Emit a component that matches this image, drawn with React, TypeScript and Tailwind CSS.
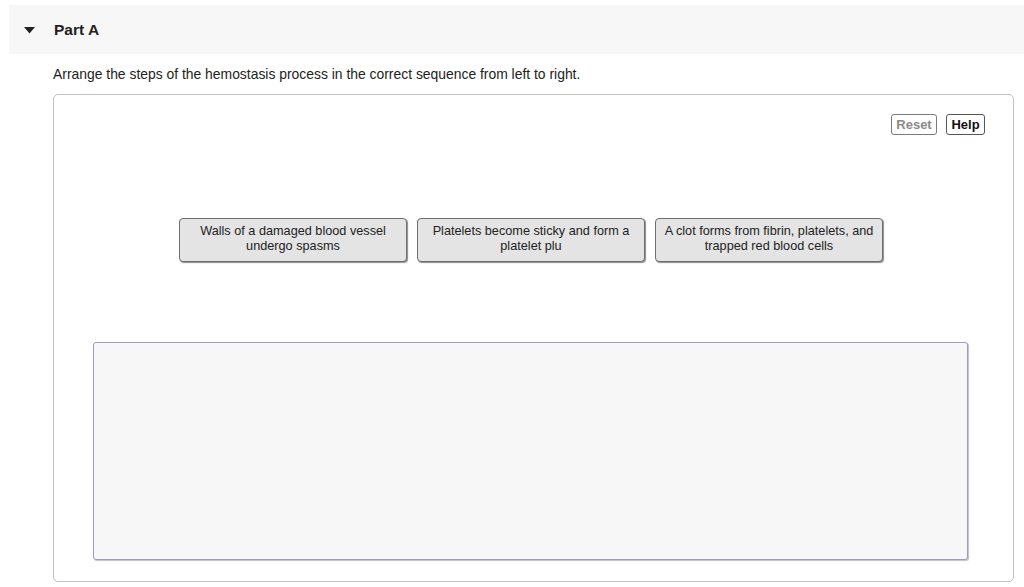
import React from "react";

const steps = [
  "Walls of a damaged blood vessel undergo spasms",
  "Platelets become sticky and form a platelet plu",
  "A clot forms from fibrin, platelets, and trapped red blood cells",
];

export default function App() {
  return (
    <div
      className="h-[587px] w-[1024px] overflow-hidden bg-white text-[#222]"
      style={{ fontFamily: '"Liberation Sans", Arial, sans-serif' }}
    >
      {/* Part header */}
      <div className="ml-[9px] mt-[5px] flex h-[49px] items-center bg-[#f7f7f7]">
        <svg width="11" height="7" viewBox="0 0 11 7" className="ml-[15px] mt-[1px]">
          <path d="M0 0 L11 0 L5.5 6.5 Z" fill="#222" />
        </svg>
        <span className="ml-[19px] text-[15.5px] font-bold text-[#222]">Part A</span>
      </div>

      <p className="ml-[53px] mt-[12px] text-[13.9px] leading-[16px] text-[#222]">
        Arrange the steps of the hemostasis process in the correct sequence from left to right.
      </p>

      {/* Activity area */}
      <div className="ml-[53px] mt-[12px] flex h-[488px] w-[961px] flex-col rounded-[5px] border border-[#c2c2c2]">
        <div className="mr-[28px] mt-[19px] flex justify-end gap-[9px]">
          <button className="h-[21px] w-[46px] rounded-[3px] border border-[#7a7a7a] bg-white text-[13px] font-bold text-[#8a8a8a]">
            Reset
          </button>
          <button className="h-[21px] w-[39px] rounded-[3px] border border-[#555] bg-white text-[13px] font-bold text-[#111]">
            Help
          </button>
        </div>

        <div className="ml-[125px] mt-[83px] flex gap-[10px]">
          {steps.map((s) => (
            <div
              key={s}
              className="flex h-[44px] w-[228px] items-center justify-center rounded-[4px] border border-[#6e6e6e] bg-[#e4e4e4] px-[6px] pb-[2px] text-center text-[12.7px] leading-[15px] text-[#222] shadow-[1px_1px_1px_rgba(0,0,0,0.45)]"
            >
              {s}
            </div>
          ))}
        </div>

        <div className="ml-[39px] mt-[80px] h-[218px] w-[875px] rounded-[3px] border border-[#9d9cbd] bg-[#f7f7f7] shadow-[1px_1px_1px_rgba(0,0,0,0.25)]" />
      </div>
    </div>
  );
}
